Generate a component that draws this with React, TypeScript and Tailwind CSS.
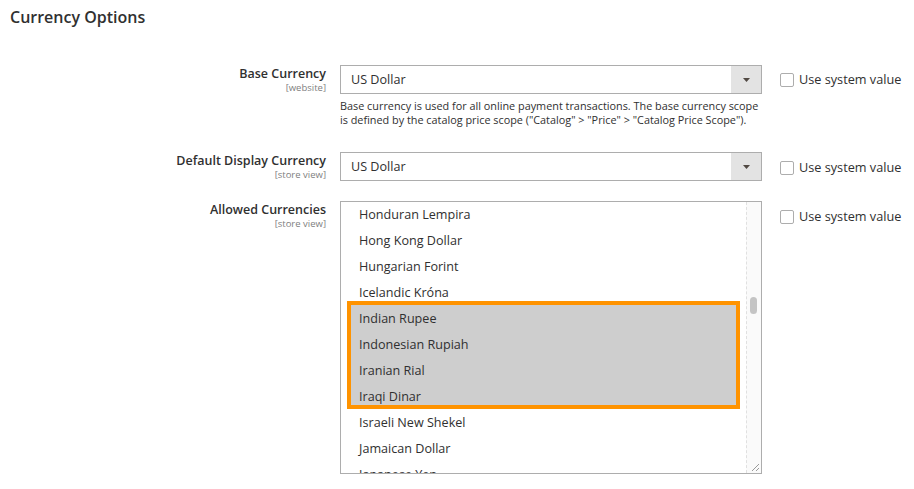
import React from "react";

const font = { fontFamily: '"Open Sans", "Noto Sans", Arial, sans-serif' };

function Checkbox() {
  return (
    <label className="flex items-center gap-[5px] text-[12.7px] text-[#303030] whitespace-nowrap">
      <span className="w-[14px] h-[14px] border border-[#adadad] rounded-[2px] bg-white shrink-0" />
      <span>Use system value</span>
    </label>
  );
}

function Select({ value }: { value: string }) {
  return (
    <div className="flex h-[29px] w-[422px] border border-[#adadad] bg-white">
      <div className="flex-1 flex items-center pl-[10px] pt-[1px] text-[12.6px] text-[#303030]">{value}</div>
      <div className="w-[30px] bg-[#e3e3e3] flex items-center justify-center">
        <svg width="7" height="4" viewBox="0 0 7 4">
          <path d="M0 0 L7 0 L3.5 4 Z" fill="#514943" />
        </svg>
      </div>
    </div>
  );
}

function Label({ title, scope }: { title: string; scope: string }) {
  return (
    <div className="w-[326px] text-right leading-none">
      <div className="text-[12.5px] font-semibold text-[#303030] leading-[15px]">{title}</div>
      <div className="mt-[1px] text-[9.5px] text-[#808080] leading-[12px]">{scope}</div>
    </div>
  );
}

const options = [
  "Honduran Lempira",
  "Hong Kong Dollar",
  "Hungarian Forint",
  "Icelandic Króna",
  "Indian Rupee",
  "Indonesian Rupiah",
  "Iranian Rial",
  "Iraqi Dinar",
  "Israeli New Shekel",
  "Jamaican Dollar",
  "Japanese Yen",
];

export default function App() {
  return (
    <div className="w-[914px] h-[489px] bg-white overflow-hidden" style={font}>
      <h2 className="pl-[10px] pt-[6px] text-[16px] font-semibold text-[#303030] leading-[22px]">
        Currency Options
      </h2>

      <div className="mt-[37px] flex flex-col">
        {/* Base currency */}
        <div className="flex items-start">
          <div className="pt-[1px]">
            <Label title="Base Currency" scope="[website]" />
          </div>
          <div className="ml-[14px] flex flex-col">
            <Select value="US Dollar" />
            <p className="mt-[5px] w-[422px] text-[10.85px] leading-[14px] text-[#303030]">
              Base currency is used for all online payment transactions. The base currency scope is defined by the catalog price scope ("Catalog" &gt; "Price" &gt; "Catalog Price Scope").
            </p>
          </div>
          <div className="ml-[18px] pt-[5px]">
            <Checkbox />
          </div>
        </div>

        {/* Default display */}
        <div className="mt-[25px] flex items-start">
          <div className="pt-[1px]">
            <Label title="Default Display Currency" scope="[store view]" />
          </div>
          <div className="ml-[14px]">
            <Select value="US Dollar" />
          </div>
          <div className="ml-[18px] pt-[6px]">
            <Checkbox />
          </div>
        </div>

        {/* Allowed */}
        <div className="mt-[20px] flex items-start">
          <div className="pt-[1px]">
            <Label title="Allowed Currencies" scope="[store view]" />
          </div>
          <div className="ml-[14px] relative w-[422px] h-[273px] border border-[#adadad] bg-white overflow-hidden flex">
            <div className="relative flex-1">
              <div className="absolute left-[6px] top-[99px] w-[393px] h-[108px] border-[4px] border-[#ff9300] bg-[#cecece]" />
              <ul className="relative">
                {options.map((o) => (
                  <li key={o} className="h-[26px] flex items-center pl-[18px] text-[12.6px] text-[#303030]">
                    {o}
                  </li>
                ))}
              </ul>
            </div>
            <div className="w-[15px] h-full bg-[#fafafa] border-l border-dashed border-[#e0e0e0] relative">
              <div className="absolute left-[3px] top-[95px] w-[7px] h-[17px] rounded-full bg-[#c4c4c4]" />
              <svg className="absolute right-[1px] bottom-[1px]" width="10" height="10" viewBox="0 0 10 10">
                <path d="M9 2 L2 9 M9 6 L6 9" stroke="#9a9a9a" strokeWidth="1" />
              </svg>
            </div>
          </div>
          <div className="ml-[18px] pt-[6px]">
            <Checkbox />
          </div>
        </div>
      </div>
    </div>
  );
}
